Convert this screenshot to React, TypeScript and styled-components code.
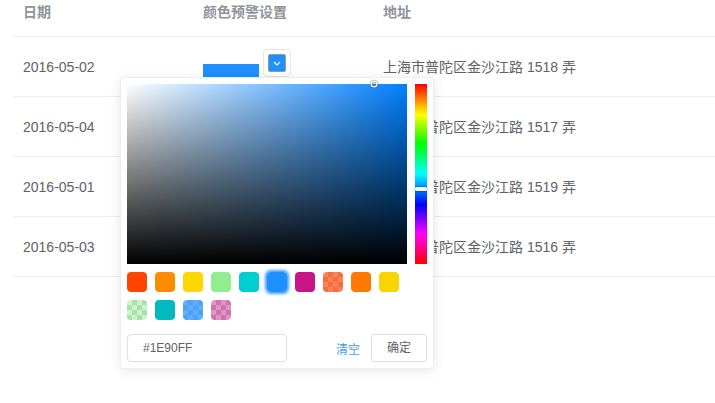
import React from 'react';
import styled, { createGlobalStyle, css } from 'styled-components';

const ROWS = [
  { date: '2016-05-02', address: '上海市普陀区金沙江路 1518 弄' },
  { date: '2016-05-04', address: '上海市普陀区金沙江路 1517 弄' },
  { date: '2016-05-01', address: '上海市普陀区金沙江路 1519 弄' },
  { date: '2016-05-03', address: '上海市普陀区金沙江路 1516 弄' },
];

const PREDEFINE = [
  { color: '#ff4500' },
  { color: '#ff8c00' },
  { color: '#ffd700' },
  { color: '#90ee90' },
  { color: '#00ced1' },
  { color: '#1e90ff', selected: true },
  { color: '#c71585' },
  { color: 'rgba(255, 69, 0, 0.68)', alpha: true },
  { color: 'rgb(255, 120, 0)' },
  { color: '#fad400' },
  { color: 'rgba(144, 240, 144, 0.5)', alpha: true },
  { color: '#00babd' },
  { color: 'rgba(31, 147, 255, 0.73)', alpha: true },
  { color: 'rgba(199, 21, 133, 0.47)', alpha: true },
];

const GlobalStyle = createGlobalStyle`
  body {
    margin: 0;
    background: #fff;
    font-family: "Liberation Sans", "Noto Sans CJK SC", sans-serif;
  }
`;

const Page = styled.div`
  position: relative;
  width: 715px;
  height: 403px;
  overflow: hidden;
  padding-left: 13px;
  box-sizing: border-box;
`;

const Table = styled.div`
  width: 100%;
  font-size: 14px;
`;

const Row = styled.div<{ head?: boolean }>`
  display: grid;
  grid-template-columns: 180px 180px 1fr;
  border-bottom: 1px solid #ebeef5;
  height: ${(p) => (p.head ? '36px' : '59px')};
  align-items: ${(p) => (p.head ? 'start' : 'center')};
  color: ${(p) => (p.head ? '#909399' : '#606266')};
  font-weight: ${(p) => (p.head ? 700 : 400)};
`;

const Cell = styled.div`
  padding: 0 10px;
  line-height: 24px;
  white-space: nowrap;
`;

const ColorCell = styled.div`
  display: flex;
  align-items: flex-start;
  gap: 4px;
  padding: 0 10px;
  height: 59px;
  box-sizing: border-box;
  padding-top: 12px;
`;

const Bar = styled.div`
  width: 56px;
  height: 24px;
  margin-top: 15px;
  background: #1e90ff;
`;

const Trigger = styled.div`
  width: 28px;
  height: 28px;
  box-sizing: border-box;
  padding: 4px;
  border: 1px solid #e6e6e6;
  border-radius: 4px;
`;

const TriggerColor = styled.div`
  height: 100%;
  box-sizing: border-box;
  border: 1px solid #999;
  border-radius: 2px;
  background: #1e90ff;
  display: flex;
  align-items: center;
  justify-content: center;
`;

const Dropdown = styled.div`
  position: absolute;
  left: 120px;
  top: 77px;
  width: 300px;
  padding: 6px;
  background: #fff;
  border: 1px solid #ebeef5;
  border-radius: 4px;
  box-shadow: 0 2px 12px 0 rgba(0, 0, 0, 0.1);
`;

const Main = styled.div`
  display: flex;
  justify-content: space-between;
`;

const SvPanel = styled.div`
  position: relative;
  width: 280px;
  height: 180px;
  background-color: #0080ff;
  background-image: linear-gradient(to top, #000, rgba(0, 0, 0, 0)),
    linear-gradient(to right, #fff, rgba(255, 255, 255, 0));
`;

const SvCursor = styled.div`
  position: absolute;
  left: 247px;
  top: 0;
  width: 4px;
  height: 4px;
  border-radius: 50%;
  transform: translate(-2px, -2px);
  box-shadow: 0 0 0 1.5px #fff, inset 0 0 1px 1px rgba(0, 0, 0, 0.3), 0 0 1px 2px rgba(0, 0, 0, 0.4);
`;

const Hue = styled.div`
  position: relative;
  width: 12px;
  height: 180px;
  background: linear-gradient(to bottom, red 0, #ff0 17%, lime 33%, cyan 50%, blue 67%, #f0f 83%, red);
`;

const HueThumb = styled.div`
  position: absolute;
  left: 0;
  top: 103px;
  width: 100%;
  height: 4px;
  box-sizing: border-box;
  background: #fff;
  border: 1px solid #f0f0f0;
  border-radius: 1px;
  box-shadow: 0 0 2px rgba(0, 0, 0, 0.6);
`;

const Predefine = styled.div`
  display: flex;
  flex-wrap: wrap;
  margin-top: 8px;
  width: 280px;
`;

const checker = css`
  background-image: conic-gradient(#ccc 25%, #fff 0 50%, #ccc 0 75%, #fff 0);
  background-size: 10px 10px;
`;

const Swatch = styled.div<{ alpha?: boolean; selected?: boolean; first?: boolean }>`
  width: 20px;
  height: 20px;
  margin: 0 0 8px ${(p) => (p.first ? 0 : 8)}px;
  border-radius: 4px;
  overflow: hidden;
  ${(p) => p.alpha && checker};
  box-shadow: ${(p) => (p.selected ? '0 0 3px 2px #409eff' : 'none')};
`;

const SwatchFill = styled.div`
  height: 100%;
  border-radius: 3px;
`;

const Btns = styled.div`
  display: flex;
  align-items: center;
  margin-top: 6px;
`;

const Input = styled.div`
  width: 160px;
  height: 28px;
  box-sizing: border-box;
  border: 1px solid #dcdfe6;
  border-radius: 4px;
  padding: 0 15px;
  font-size: 12px;
  line-height: 26px;
  color: #606266;
`;

const LinkBtn = styled.span`
  margin-left: auto;
  margin-right: 11px;
  font-size: 12px;
  color: #409eff;
`;

const PlainBtn = styled.div`
  height: 28px;
  box-sizing: border-box;
  padding: 0 15px;
  border: 1px solid #dcdfe6;
  border-radius: 3px;
  font-size: 12px;
  line-height: 26px;
  color: #606266;
`;

const Chevron = () => (
  <svg width="8" height="5" viewBox="0 0 8 5">
    <polyline points="1,1 4,4 7,1" fill="none" stroke="#fff" strokeWidth="1.2" />
  </svg>
);

const App = () => {
  return (
    <Page>
      <GlobalStyle />
      <Table>
        <Row head>
          <Cell>日期</Cell>
          <Cell>颜色预警设置</Cell>
          <Cell>地址</Cell>
        </Row>
        {ROWS.map((row) => (
          <Row key={row.date}>
            <Cell>{row.date}</Cell>
            <ColorCell>
              <Bar />
              <Trigger>
                <TriggerColor>
                  <Chevron />
                </TriggerColor>
              </Trigger>
            </ColorCell>
            <Cell>{row.address}</Cell>
          </Row>
        ))}
      </Table>
      <Dropdown>
        <Main>
          <SvPanel>
            <SvCursor />
          </SvPanel>
          <Hue>
            <HueThumb />
          </Hue>
        </Main>
        <Predefine>
          {PREDEFINE.map((item, index) => (
            <Swatch key={index} alpha={item.alpha} selected={item.selected} first={index % 10 === 0}>
              <SwatchFill style={{ background: item.color }} />
            </Swatch>
          ))}
        </Predefine>
        <Btns>
          <Input>#1E90FF</Input>
          <LinkBtn>清空</LinkBtn>
          <PlainBtn>确定</PlainBtn>
        </Btns>
      </Dropdown>
    </Page>
  );
};

export default App;
